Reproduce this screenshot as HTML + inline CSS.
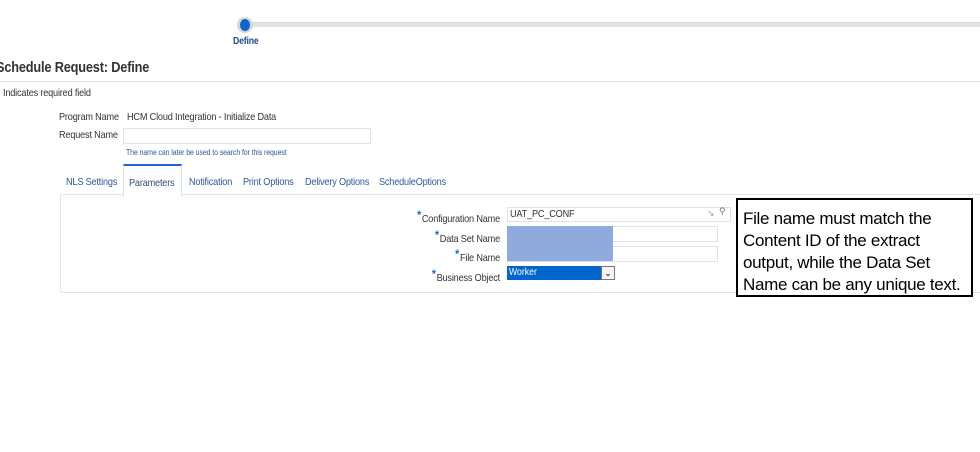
<!DOCTYPE html><html><head><style>
body{margin:0;width:980px;height:452px;background:#fff;position:relative;overflow:hidden;font-family:"Liberation Sans",sans-serif;}
.a{position:absolute;white-space:nowrap;}
.sx{transform:scaleX(0.87);transform-origin:left top;}
.n{font-size:10.5px;letter-spacing:-0.2px;color:#333;}
.t{font-size:10.5px;letter-spacing:-0.2px;color:#2a5a9a;}
.lab{font-size:10.5px;letter-spacing:-0.2px;color:#333;text-align:right;width:200px;transform:scaleX(0.87);transform-origin:right top;}
.st{color:#1a66cc;font-size:12px;font-weight:bold;vertical-align:3px;margin-right:1px}
.in{position:absolute;border:1px solid #dde3ea;background:#fff;}
</style></head><body>
<div class="a" style="left:252px;top:22px;width:728px;height:4px;background:#e4e4e4;border-top:1px solid #d8d8d8"></div>
<div class="a" style="left:237px;top:17px;width:16px;height:16px;border-radius:50%;background:#d6d6d6"></div>
<div class="a" style="left:240px;top:19px;width:10px;height:12px;border-radius:50%;background:#0a66c8"></div>
<div class="a sx" style="left:233px;top:36px;font-size:10px;font-weight:bold;color:#1f4e8c;letter-spacing:-0.2px">Define</div>
<div class="a" style="left:-4px;top:59px;font-size:15px;font-weight:bold;color:#333;letter-spacing:-0.2px;transform:scaleX(0.85);transform-origin:left top">Schedule Request: Define</div>
<div class="a" style="left:0;top:81px;width:980px;height:1px;background:#dfe3e8"></div>
<div class="a n sx" style="left:3px;top:87px">Indicates required field</div>
<div class="a n sx" style="left:59px;top:111px">Program Name</div>
<div class="a n sx" style="left:127px;top:111px">HCM Cloud Integration - Initialize Data</div>
<div class="a n sx" style="left:59px;top:129px">Request Name</div>
<div class="in" style="left:123px;top:128px;width:246px;height:14px"></div>
<div class="a sx" style="left:126px;top:148px;font-size:8px;color:#2a5a9a;letter-spacing:-0.1px">The name can later be used to search for this request</div>
<div class="a" style="left:123px;top:164px;width:57px;height:31px;border-left:1px solid #dde3ea;border-right:1px solid #dde3ea;border-top:2px solid #1a66cc;background:#fff;z-index:2"></div>
<div class="a" style="left:60px;top:194px;width:930px;height:97px;border:1px solid #e2e6ea;border-radius:2px"></div>
<div class="a t sx" style="left:66px;top:176px">NLS Settings</div>
<div class="a t sx" style="left:129px;top:177px;color:#2d4f7c;z-index:3">Parameters</div>
<div class="a t sx" style="left:189px;top:176px">Notification</div>
<div class="a t sx" style="left:243px;top:176px">Print Options</div>
<div class="a t sx" style="left:305px;top:176px">Delivery Options</div>
<div class="a t sx" style="left:379px;top:176px">ScheduleOptions</div>
<div class="a lab" style="left:300px;top:208px"><span class="st">*</span>Configuration Name</div>
<div class="a lab" style="left:300px;top:228px"><span class="st">*</span>Data Set Name</div>
<div class="a lab" style="left:300px;top:247px"><span class="st">*</span>File Name</div>
<div class="a lab" style="left:300px;top:267px"><span class="st">*</span>Business Object</div>
<div class="in" style="left:507px;top:207px;width:222px;height:13px"></div>
<div class="a n sx" style="left:510px;top:208px">UAT_PC_CONF</div>
<div class="a" style="left:707px;top:208px;font-size:9px;color:#999">↘</div>
<div class="a" style="left:719px;top:206px;font-size:9px;color:#777">⚲</div>
<div class="in" style="left:507px;top:226px;width:209px;height:14px"></div>
<div class="in" style="left:507px;top:246px;width:209px;height:14px"></div>
<div class="a" style="left:507px;top:226px;width:106px;height:35px;background:#8faadc"></div>
<div class="a" style="left:507px;top:266px;width:94px;height:14px;background:#0066cc"></div>
<div class="a sx" style="left:509px;top:267px;color:#fff;font-size:10px;line-height:12px">Worker</div>
<div class="a" style="left:601px;top:266px;width:12px;height:12px;border:1px solid #777;background:#f4f4f4;font-size:9px;line-height:12px;text-align:center">⌄</div>
<div class="a" style="left:736px;top:198px;width:228px;height:87px;border:2px solid #000;background:#fff;font-size:17px;line-height:22px;padding:8px 0 0 5px;color:#000;white-space:nowrap;letter-spacing:-0.3px;overflow:hidden">File name must match the<br>Content ID of the extract<br>output, while the Data Set<br>Name can be any unique text.</div>
</body></html>
